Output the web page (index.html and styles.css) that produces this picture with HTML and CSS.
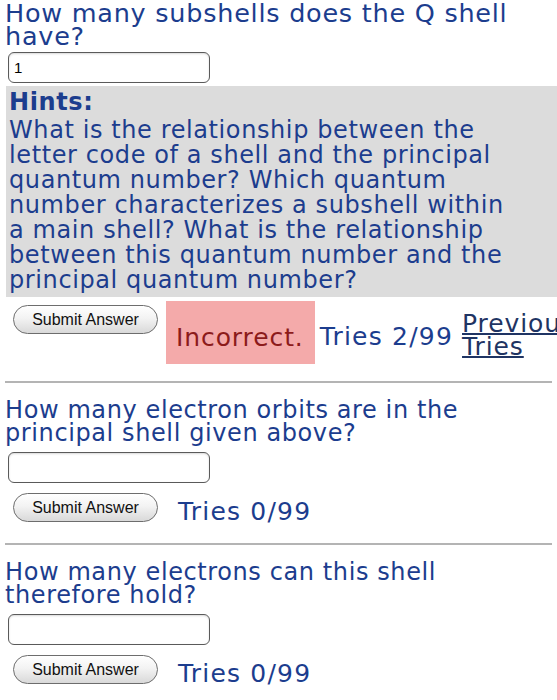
FILE: index.html
```html
<!DOCTYPE html>
<html>
<head>
<meta charset="utf-8">
<link rel="stylesheet" href="styles.css">
</head>
<body>
<div class="part">
  <div class="qtext qtext-first">How many subshells does the Q shell have?</div>
  <input class="answer answer-first" type="text" value="1">
  <div class="hints">
    <div class="hints-title">Hints:</div>
    <div class="hints-text">What is the relationship between the letter code of a shell and the principal quantum number? Which quantum number characterizes a subshell within a main shell? What is the relationship between this quantum number and the principal quantum number?</div>
  </div>
  <div class="row">
    <button class="submit" type="button">Submit Answer</button>
    <div class="feedback">Incorrect.</div>
    <div class="tries tries-after-feedback">Tries 2/99</div>
    <a class="prev" href="#">Previous Tries</a>
  </div>
</div>
<hr class="sep">
<div class="part">
  <div class="qtext">How many electron orbits are in the principal shell given above?</div>
  <input class="answer" type="text" value="">
  <div class="row">
    <button class="submit" type="button">Submit Answer</button>
    <div class="tries">Tries 0/99</div>
  </div>
</div>
<hr class="sep">
<div class="part">
  <div class="qtext">How many electrons can this shell therefore hold?</div>
  <input class="answer" type="text" value="">
  <div class="row">
    <button class="submit" type="button">Submit Answer</button>
    <div class="tries">Tries 0/99</div>
  </div>
</div>
</body>
</html>
```

FILE: styles.css
```css
html {
  overflow: hidden;
}
body {
  margin: 0;
  padding: 2px 5px 0 5px;
  font-family: "DejaVu Sans", Verdana, sans-serif;
  font-size: 24px;
  letter-spacing: 0.6px;
  color: #1c3d8e;
  background: #ffffff;
}
.qtext {
  max-width: 515px;
  line-height: 23px;
}
.qtext-first {
  font-size: 25.5px;
  letter-spacing: 0.75px;
}
.answer {
  display: block;
  box-sizing: border-box;
  width: 202px;
  height: 31px;
  margin: 7px 0 6px 3px;
  padding: 0 5px;
  border: 1.5px solid #5a5a5a;
  border-radius: 6px;
  box-shadow: inset 0 1px 2px rgba(0,0,0,0.15);
  font-family: "Liberation Sans", Arial, sans-serif;
  font-size: 15px;
  letter-spacing: 0;
  color: #000;
  background: #fff;
}
.answer-first {
  margin-top: 4px;
  margin-bottom: 3px;
}
.hints {
  margin: 2px -5px 0 1px;
  padding: 4px 0 4px 3px;
  background: #dcdcdc;
}
.hints-title {
  font-weight: bold;
  line-height: 25px;
  margin-bottom: 3px;
}
.hints-text {
  max-width: 505px;
  line-height: 25px;
}
.row {
  display: flex;
  align-items: center;
  margin-top: 4px;
}
.submit {
  flex-shrink: 0;
  align-self: flex-start;
  box-sizing: border-box;
  width: 145px;
  height: 29px;
  margin: 4px 0 0 8px;
  padding: 0;
  border: 1px solid #6d6d6d;
  border-radius: 15px;
  background: linear-gradient(#ffffff 0%, #f3f3f3 45%, #d9d9d9 100%);
  font-family: "Liberation Sans", Arial, sans-serif;
  font-size: 16px;
  letter-spacing: 0;
  color: #111;
}
.feedback {
  flex-shrink: 0;
  box-sizing: border-box;
  height: 63px;
  margin-left: 8px;
  padding: 10px 11px 0 10px;
  display: flex;
  align-items: center;
  background: #f4aaaa;
  color: #8c1b1b;
  font-size: 25px;
  letter-spacing: 0.9px;
  line-height: 25px;
}
.tries {
  flex-shrink: 0;
  font-size: 25px;
  letter-spacing: 1.2px;
  line-height: 25px;
  margin: 10px 0 2px 20px;
  white-space: nowrap;
}
.tries-after-feedback {
  margin-left: 5px;
}
.prev {
  flex-shrink: 0;
  width: min-content;
  margin: 5px 0 0 9px;
  font-size: 25px;
  letter-spacing: 0.9px;
  line-height: 23px;
  color: #1f3463;
  text-decoration: underline;
  text-decoration-thickness: 1.5px;
}
.sep {
  margin: 17px 0 16px 0;
  border: 0;
  height: 2px;
  background: #b4b4b4;
}
```
